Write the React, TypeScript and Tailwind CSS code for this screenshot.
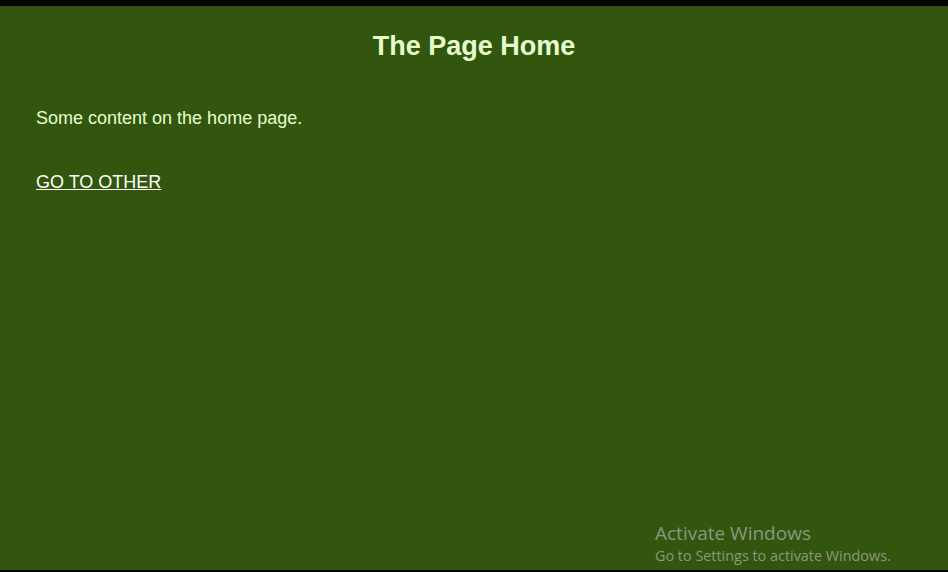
export default function App() {
  return (
    <div className="relative flex h-[572px] w-full flex-col bg-black font-['Liberation_Sans',Arial,sans-serif]">
      <div className="h-[6px] shrink-0 bg-[#050505]" />
      <div className="h-px shrink-0 bg-[#3b3f38]" />
      <main className="flex-1 bg-[#32560e] px-9 pt-[24px]">
        <h1 className="text-center text-[27px] font-bold leading-[31px] text-[#e6ffcc]">The Page Home</h1>
        <p className="mt-[46px] text-[18px] leading-[21px] text-[#e6ffcc]">Some content on the home page.</p>
        <a href="#" className="mt-[43px] inline-block text-[18px] leading-[21px] text-white underline">
          GO TO OTHER
        </a>
      </main>
      <div className="h-[2px] shrink-0 bg-black" />

      {/* windows watermark */}
      <div className="pointer-events-none absolute left-[655px] top-[520px] font-['Open_Sans','Noto_Sans',sans-serif] text-[#8a9880]">
        <div className="text-[19px] leading-[26px]">Activate Windows</div>
        <div className="text-[14.4px] leading-[20px]">Go to Settings to activate Windows.</div>
      </div>
    </div>
  );
}
